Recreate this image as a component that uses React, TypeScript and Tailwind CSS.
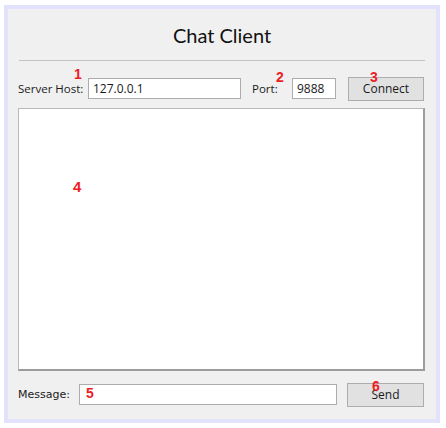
import React from "react";

const ui = { fontFamily: '"Open Sans", "Noto Sans", sans-serif' };
const dv = { fontFamily: '"DejaVu Sans", sans-serif' };
const tag = { fontFamily: '"Liberation Sans", Arial, sans-serif' };

function Tag({ n, className }: { n: string; className: string }) {
  return (
    <span
      style={tag}
      className={`absolute text-[14px] font-bold leading-none text-[#ee1c24] ${className}`}
    >
      {n}
    </span>
  );
}

export default function App() {
  return (
    <div className="relative w-[446px] h-[428px] bg-white pt-[5px] pl-[4px]">
      <div className="w-[436px] h-[418px] bg-[#e2e2fc] p-[4px]">
        <div className="h-full bg-[#f0f0f0] flex flex-col px-[10px] pt-[14px]">
          <div
            style={{ fontFamily: 'Lato, "Open Sans", sans-serif' }}
            className="text-center text-[20px] leading-6 text-[#111]"
          >
            Chat Client
          </div>
          <div className="mt-[13px] mx-px h-px bg-[#c2c2c2]" />

          <div style={ui} className="mt-[16px] flex h-[24px] items-center text-[12px] text-[#1a1a1a]">
            <span className="w-[70px] text-[11.5px]">Server Host:</span>
            <div className="w-[153px] h-[21px] self-start mt-px bg-white border border-[#acacac] flex items-center px-[4px]">
              127.0.0.1
            </div>
            <span className="ml-[11px] w-[40px] text-[11.5px]">Port:</span>
            <div className="w-[44px] h-[21px] self-start mt-px bg-white border border-[#acacac] flex items-center px-[4px]">
              9888
            </div>
            <div className="ml-[12px] w-[76px] h-[24px] bg-[#e1e1e1] border border-[#adadad] flex items-center justify-center">
              Connect
            </div>
          </div>

          <div className="mt-[7px] w-[407px] h-[263px] bg-white border-t border-l border-[#b9b9b9] border-r-2 border-b-2 border-r-[#9c9c9c] border-b-[#9c9c9c]" />

          <div className="mt-[12px] flex h-[24px] items-center text-[#1a1a1a]">
            <span style={dv} className="w-[61px] text-[11px]">Message:</span>
            <div className="w-[258px] h-[21px] self-start mt-px bg-white border border-[#acacac]" />
            <div style={ui} className="ml-[10px] w-[77px] h-[24px] bg-[#e1e1e1] border border-[#adadad] flex items-center justify-center text-[12px]">
              Send
            </div>
          </div>
        </div>
      </div>

      <Tag n="1" className="left-[74px] top-[67px]" />
      <Tag n="2" className="left-[276px] top-[70px]" />
      <Tag n="3" className="left-[370px] top-[70px]" />
      <Tag n="4" className="left-[73px] top-[179px] text-[15px]" />
      <Tag n="5" className="left-[86px] top-[386px]" />
      <Tag n="6" className="left-[372px] top-[379px]" />
    </div>
  );
}
